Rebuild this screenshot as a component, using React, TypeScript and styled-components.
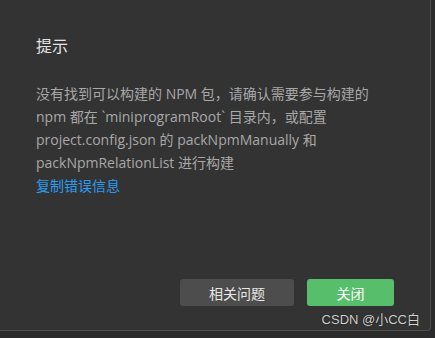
import React from 'react'
import styled, { createGlobalStyle } from 'styled-components'

const GlobalStyle = createGlobalStyle`
  html, body {
    margin: 0;
    padding: 0;
    background: #2b2b2b;
  }
  body {
    font-family: "Open Sans", "Noto Sans CJK SC", sans-serif;
  }
`;

const Page = styled.div`
  position: relative;
  width: 435px;
  height: 338px;
  overflow: hidden;
  background: #2b2b2b;
`;

const Dialog = styled.div`
  box-sizing: border-box;
  width: 431px;
  height: 331px;
  display: flex;
  flex-direction: column;
  padding: 35px 36px 24px 36px;
  background: #333333;
  border-right: 1px solid #4e4e4e;
  border-bottom: 1px solid #4e4e4e;
  border-bottom-right-radius: 4px;
`;

const Title = styled.h2`
  margin: 0;
  font-size: 16px;
  font-weight: 400;
  line-height: 22px;
  color: #e4e4e4;
`;

const Body = styled.div`
  margin-top: 25px;
  font-size: 14px;
  line-height: 23px;
  color: #a8a8a8;
`;

const Line = styled.span`
  display: block;
  white-space: nowrap;
`;

const CopyLink = styled.a`
  display: block;
  color: #2a9cf2;
  text-decoration: none;
  cursor: pointer;
`;

const Footer = styled.div`
  margin-top: auto;
  display: flex;
  justify-content: flex-end;
  gap: 13px;
`;

const Button = styled.button<{ $primary?: boolean }>`
  height: 27px;
  width: ${({ $primary }) => ($primary ? '87px' : '114px')};
  border: none;
  border-radius: 3px;
  padding: 0;
  font-family: inherit;
  font-size: 14px;
  color: ${({ $primary }) => ($primary ? '#ffffff' : '#e8e8e8')};
  background: ${({ $primary }) => ($primary ? '#57bf6b' : '#4d4d4d')};
  cursor: pointer;
`;

const Watermark = styled.div`
  position: absolute;
  right: 15px;
  top: 311px;
  font-family: "Liberation Sans", "Noto Sans CJK SC", sans-serif;
  font-size: 13px;
  line-height: 18px;
  color: #d2d2d2;
  text-shadow: 0 0 1px #000;
`;

const App = () => {
  return (
    <Page>
      <GlobalStyle />
      <Dialog>
        <Title>提示</Title>
        <Body>
          <Line>没有找到可以构建的 NPM 包，请确认需要参与构建的</Line>
          <Line>npm 都在 `miniprogramRoot` 目录内，或配置</Line>
          <Line>project.config.json 的 packNpmManually 和</Line>
          <Line>packNpmRelationList 进行构建</Line>
          <CopyLink>复制错误信息</CopyLink>
        </Body>
        <Footer>
          <Button>相关问题</Button>
          <Button $primary>关闭</Button>
        </Footer>
      </Dialog>
      <Watermark>CSDN @小CC白</Watermark>
    </Page>
  )
}

export default App
